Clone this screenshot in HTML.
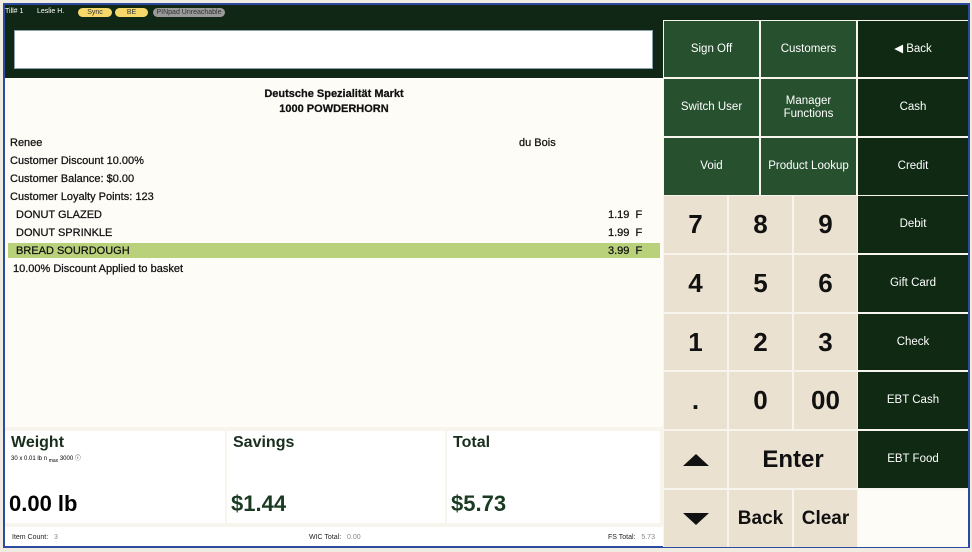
<!DOCTYPE html>
<html><head><meta charset="utf-8"><style>
*{margin:0;padding:0;box-sizing:border-box}
body{width:972px;height:552px;background:#f1ece1;position:relative;overflow:hidden;font-family:"Liberation Sans",sans-serif}
.a{position:absolute}
.frame{left:3px;top:3px;width:967px;height:545px;border:2px solid #2b4aa0;background:#fdfcf7}
.top{left:5px;top:5px;width:963px;height:15px;background:#0f2714;color:#fff;font-size:7px}
.pill{position:absolute;top:3px;height:9px;border-radius:5px;font-size:7px;line-height:9px;text-align:center}
.b{position:absolute;display:flex;align-items:center;justify-content:center;text-align:center;color:#fff;font-size:11.5px;line-height:13px}
.g{background:#27502f}.d{background:#0f2913}
.n{background:#ebe1d0;color:#111;font-weight:bold;font-size:26px}
.t{font-size:11px;color:#111;position:absolute;white-space:nowrap;-webkit-text-stroke:0.25px #111}
.box{position:absolute;top:431px;height:92px;background:#fff}
.h{position:absolute;left:6px;top:3px;font-size:16px;font-weight:bold;color:#1a2e1e}
.v{position:absolute;left:4px;top:60px;font-size:23px;font-weight:bold;color:#1a3a22}
.f{position:absolute;top:534px;font-size:7px;color:#222}
</style></head><body>
<div class="a frame"></div>
<div class="a top">
<span class="a" style="left:0px;top:3px">Till# 1</span>
<span class="a" style="left:32px;top:3px">Leslie H.</span>
<div class="pill" style="left:73px;width:34px;background:#f5d76a;color:#333">Sync</div>
<div class="pill" style="left:110px;width:33px;background:#f5d76a;color:#333">BE</div>
<div class="pill" style="left:148px;width:72px;background:#999;color:#333">PINpad Unreachable</div>
</div>
<div class="a" style="left:5px;top:20px;width:658px;height:58px;background:#0f2714"></div>
<div class="a" style="left:14px;top:30px;width:639px;height:39px;background:#fff;border:1px solid #8aa0b0"></div>

<div class="t" style="left:0;width:668px;text-align:center;top:88px;font-weight:bold">Deutsche Spezialität Markt</div>
<div class="t" style="left:0;width:668px;text-align:center;top:103px;font-weight:bold">1000 POWDERHORN</div>
<div class="t" style="left:10px;top:137px">Renee</div>
<div class="t" style="left:519px;top:137px">du Bois</div>
<div class="t" style="left:10px;top:155px">Customer Discount 10.00%</div>
<div class="t" style="left:10px;top:173px">Customer Balance: $0.00</div>
<div class="t" style="left:10px;top:191px">Customer Loyalty Points: 123</div>
<div class="t" style="left:16px;top:209px">DONUT GLAZED</div><div class="t" style="left:608px;top:209px">1.19&nbsp;&nbsp;F</div>
<div class="t" style="left:16px;top:227px">DONUT SPRINKLE</div><div class="t" style="left:608px;top:227px">1.99&nbsp;&nbsp;F</div>
<div class="a" style="left:8px;top:243px;width:652px;height:15px;background:#b9d17a"></div>
<div class="t" style="left:16px;top:245px">BREAD SOURDOUGH</div><div class="t" style="left:608px;top:245px">3.99&nbsp;&nbsp;F</div>
<div class="t" style="left:13px;top:263px">10.00% Discount Applied to basket</div>

<div class="a" style="left:5px;top:427px;width:658px;height:119px;background:#f7f5ee"></div>
<div class="box" style="left:5px;width:220px"><div class="h">Weight</div><div class="a" style="left:6px;top:22px;font-size:6px">30 x 0.01 lb n <sub>max</sub> 3000 ⓘ</div><div class="v" style="color:#000;font-size:22px">0.00 lb</div></div>
<div class="box" style="left:227px;width:218px"><div class="h">Savings</div><div class="v" style="font-size:22px">$1.44</div></div>
<div class="box" style="left:447px;width:213px"><div class="h">Total</div><div class="v" style="font-size:22px">$5.73</div></div>
<div class="a" style="left:5px;top:527px;width:658px;height:19px;background:#fff"></div>
<div class="f" style="left:12px">Item Count:&nbsp;&nbsp;&nbsp;<span style="color:#888">3</span></div>
<div class="f" style="left:309px">WIC Total:&nbsp;&nbsp;&nbsp;<span style="color:#888">0.00</span></div>
<div class="f" style="left:608px">FS Total:&nbsp;&nbsp;&nbsp;<span style="color:#888">5.73</span></div>

<div class="a" style="left:663px;top:20px;width:305px;height:527px;background:#f8f5ee"></div>
<div class="b g" style="left:664px;top:21px;width:95px;height:56px">Sign Off</div>
<div class="b g" style="left:761px;top:21px;width:95px;height:56px">Customers</div>
<div class="b d" style="left:858px;top:21px;width:110px;height:56px">◀ Back</div>
<div class="b g" style="left:664px;top:79px;width:95px;height:57px">Switch User</div>
<div class="b g" style="left:761px;top:79px;width:95px;height:57px">Manager<br>Functions</div>
<div class="b d" style="left:858px;top:79px;width:110px;height:57px">Cash</div>
<div class="b g" style="left:664px;top:138px;width:95px;height:57px">Void</div>
<div class="b g" style="left:761px;top:138px;width:95px;height:57px">Product Lookup</div>
<div class="b d" style="left:858px;top:138px;width:110px;height:57px">Credit</div>

<div class="b n" style="left:664px;top:196px;width:63px;height:57px">7</div>
<div class="b n" style="left:729px;top:196px;width:63px;height:57px">8</div>
<div class="b n" style="left:794px;top:196px;width:63px;height:57px">9</div>
<div class="b d" style="left:858px;top:196px;width:110px;height:57px">Debit</div>
<div class="b n" style="left:664px;top:255px;width:63px;height:57px">4</div>
<div class="b n" style="left:729px;top:255px;width:63px;height:57px">5</div>
<div class="b n" style="left:794px;top:255px;width:63px;height:57px">6</div>
<div class="b d" style="left:858px;top:255px;width:110px;height:57px">Gift Card</div>
<div class="b n" style="left:664px;top:314px;width:63px;height:56px">1</div>
<div class="b n" style="left:729px;top:314px;width:63px;height:56px">2</div>
<div class="b n" style="left:794px;top:314px;width:63px;height:56px">3</div>
<div class="b d" style="left:858px;top:314px;width:110px;height:56px">Check</div>
<div class="b n" style="left:664px;top:372px;width:63px;height:57px">.</div>
<div class="b n" style="left:729px;top:372px;width:63px;height:57px">0</div>
<div class="b n" style="left:794px;top:372px;width:63px;height:57px">00</div>
<div class="b d" style="left:858px;top:372px;width:110px;height:57px">EBT Cash</div>
<div class="b n" style="left:664px;top:431px;width:63px;height:57px"><svg width="26" height="12"><polygon points="0,12 13,0 26,12" fill="#111"/></svg></div>
<div class="b n" style="left:729px;top:431px;width:128px;height:57px;font-size:24px">Enter</div>
<div class="b d" style="left:858px;top:431px;width:110px;height:57px">EBT Food</div>
<div class="b n" style="left:664px;top:490px;width:63px;height:57px"><svg width="26" height="12"><polygon points="0,0 26,0 13,12" fill="#111"/></svg></div>
<div class="b n" style="left:729px;top:490px;width:63px;height:57px;font-size:19px">Back</div>
<div class="b n" style="left:794px;top:490px;width:63px;height:57px;font-size:19px">Clear</div>
<div class="a" style="left:858px;top:490px;width:110px;height:57px;background:#fdfcf7"></div>
</body></html>
